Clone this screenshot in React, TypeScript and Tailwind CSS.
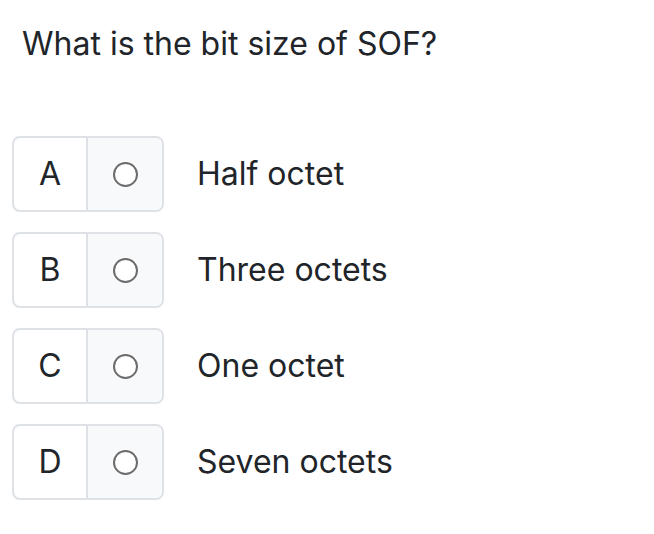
const options = [
  { letter: 'A', text: 'Half octet' },
  { letter: 'B', text: 'Three octets' },
  { letter: 'C', text: 'One octet' },
  { letter: 'D', text: 'Seven octets' },
]

export default function App() {
  return (
    <div className="bg-white min-h-screen text-[#212529] font-['Inter',sans-serif] px-[12px] pt-[22px]">
      <h1 className="text-[32px] leading-[44px] pl-[10px] font-normal">What is the bit size of SOF?</h1>

      <div className="mt-[70px] flex flex-col gap-[20px]">
        {options.map((o) => (
          <div key={o.letter} className="flex items-center">
            <div className="flex h-[76px] w-[152px] rounded-[8px] border-2 border-[#dee2e6] overflow-hidden">
              <div className="w-[74px] flex items-center justify-center text-[32px] border-r-2 border-[#dee2e6]">
                {o.letter}
              </div>
              <div className="flex-1 flex items-center justify-center bg-[#f8f9fa]">
                <span className="w-[25px] h-[25px] rounded-full border-2 border-[#6c6c6c] bg-white" />
              </div>
            </div>
            <span className="ml-[33px] text-[32px]">{o.text}</span>
          </div>
        ))}
      </div>
    </div>
  )
}
